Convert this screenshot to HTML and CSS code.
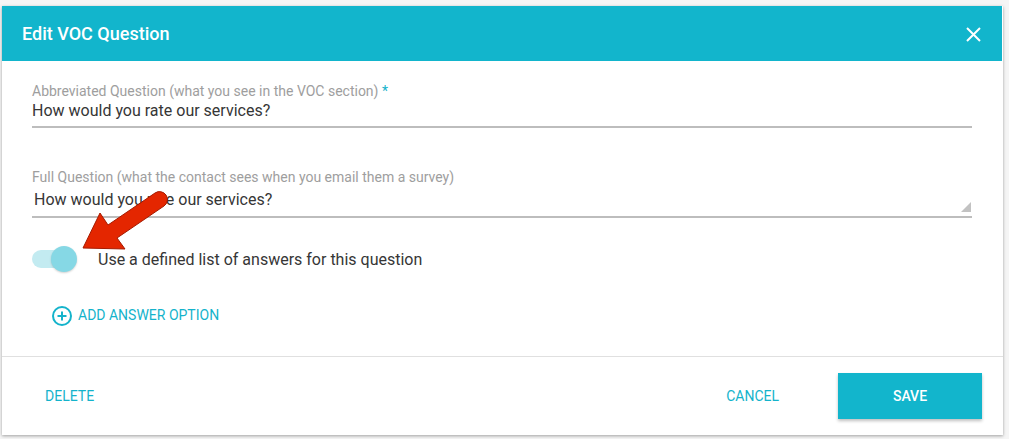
FILE: index.html
```html
<!DOCTYPE html>
<html>
<head>
<meta charset="utf-8">
<link rel="stylesheet" href="styles.css">
</head>
<body>
<div class="dialog">
  <div class="header">
    <div class="title">Edit VOC Question</div>
    <svg class="close" width="15" height="15" viewBox="0 0 15 15"><path d="M1 1L14 14M14 1L1 14" stroke="#fff" stroke-width="2" fill="none"/></svg>
  </div>
  <div class="body">
    <div class="field f1">
      <div class="label">Abbreviated Question (what you see in the VOC section) <span class="req">*</span></div>
      <div class="input">How would you rate our services?</div>
    </div>
    <div class="field f2">
      <div class="label">Full Question (what the contact sees when you email them a survey)</div>
      <div class="input area">How would you rate our services?<span class="grip"></span></div>
    </div>
    <div class="toggle-row">
      <div class="toggle"><span class="track"></span><span class="thumb"></span></div>
      <div class="toggle-text">Use a defined list of answers for this question</div>
    </div>
    <div class="add-row">
      <svg class="plus" width="22" height="22" viewBox="0 0 22 22"><circle cx="11" cy="11" r="9" stroke="#14b3cb" stroke-width="2" fill="none"/><path d="M11 6.5V15.5M6.5 11H15.5" stroke="#14b3cb" stroke-width="2"/></svg>
      <span class="add-text">ADD ANSWER OPTION</span>
    </div>
  </div>
  <div class="footer">
    <div class="btn delete">DELETE</div>
    <div class="spacer"></div>
    <div class="btn cancel">CANCEL</div>
    <div class="btn save">SAVE</div>
  </div>
  <svg class="arrow" width="200" height="120" viewBox="0 0 200 120">
    <path d="M81 56 L98 21 L106 33 L153 1 A7.5 7.5 0 0 1 162 14 L115 46 L123 57 Z" fill="#e42600" stroke="#a51a00" stroke-width="1" stroke-linejoin="round"/>
  </svg>
</div>
</body>
</html>
```
FILE: styles.css
```css
* { box-sizing: border-box; }
html, body { margin: 0; padding: 0; }
body {
  background: #f5f5f5;
  font-family: Roboto, "Liberation Sans", sans-serif;
  width: 1009px;
  height: 439px;
  overflow: hidden;
}
.dialog {
  position: relative;
  margin: 6px 0 0 2px;
  width: 1001px;
  height: 429px;
  background: #fff;
  box-shadow: 0 1px 3px rgba(0,0,0,0.35);
}
.header {
  height: 55px;
  background: #12b5cc;
  display: flex;
  align-items: center;
  padding: 0 21px 0 20px;
  width: 1000px;
}
.title {
  color: #fff;
  font-size: 18px;
  font-weight: 500;
  flex: 1;
}
.close { display: block; margin-top: 1px; }
.body {
  height: 295px;
  padding: 22px 30px 0 30px;
  width: 1000px;
}
.label {
  font-size: 14px;
  line-height: 16px;
  color: #9e9e9e;
}
.req { color: #14b3cb; }
.input {
  font-size: 16px;
  line-height: 24px;
  color: #363636;
  border-bottom: 2px solid #bdbdbd;
  padding-bottom: 3px;
  position: relative;
}
.f2 { margin-top: 41px; }
.f2 .label { margin-bottom: 3px; }
.area { padding-left: 2px; padding-bottom: 4px; }
.grip {
  position: absolute;
  right: 1px;
  bottom: 4px;
  width: 0;
  height: 0;
  border-left: 10px solid transparent;
  border-bottom: 10px solid #c2c2c2;
}
.toggle-row {
  margin-top: 26px;
  height: 30px;
  display: flex;
  align-items: center;
}
.toggle {
  position: relative;
  width: 48px;
  height: 30px;
  flex: none;
}
.track {
  position: absolute;
  left: 0;
  top: 6px;
  width: 40px;
  height: 18px;
  border-radius: 9px;
  background: #c3ebf1;
}
.thumb {
  position: absolute;
  left: 19px;
  top: 2px;
  width: 26px;
  height: 26px;
  border-radius: 50%;
  background: #86d8e5;
  box-shadow: 0 1px 2px rgba(0,0,0,0.18);
}
.toggle-text {
  margin-left: 18px;
  font-size: 16px;
  color: #363636;
}
.add-row {
  margin-top: 30px;
  margin-left: 19px;
  display: flex;
  align-items: center;
  height: 24px;
}
.plus { display: block; }
.add-text {
  margin-left: 5px;
  font-size: 14px;
  color: #14b3cb;
  margin-top: -2px;
}
.footer {
  border-top: 1px solid #e0e0e0;
  height: 79px;
  display: flex;
  align-items: center;
  padding: 0 21px 1px 30px;
  width: 1001px;
}
.btn {
  font-size: 14px;
  color: #14b3cb;
  padding: 0 13px;
  line-height: 46px;
}
.spacer { flex: 1; }
.cancel { margin-right: 46px; }
.save {
  width: 144px;
  height: 46px;
  text-align: center;
  background: #12b5cc;
  color: #fff;
  font-weight: 500;
  box-shadow: 0 2px 3px rgba(0,0,0,0.25);
}
.arrow {
  position: absolute;
  left: 0;
  top: 186px;
  pointer-events: none;
  overflow: visible;
}
```
